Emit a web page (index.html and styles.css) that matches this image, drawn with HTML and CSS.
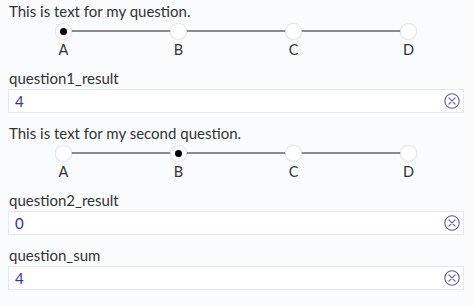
FILE: index.html
```html
<!DOCTYPE html>
<html lang="en">
<head>
  <meta charset="UTF-8">
  <title>Survey</title>
  <link rel="stylesheet" href="styles.css">
</head>
<body>
  <div class="form">
    <div class="question">
      <div class="q-text">This is text for my question.</div>
      <div class="slider">
        <div class="stops">
          <span class="knob selected"></span>
          <span class="knob"></span>
          <span class="knob"></span>
          <span class="knob"></span>
        </div>
        <div class="labels">
          <span>A</span><span>B</span><span>C</span><span>D</span>
        </div>
      </div>
    </div>
    <div class="field">
      <div class="f-label">question1_result</div>
      <div class="input">
        <span class="value">4</span>
        <svg class="clear" width="16" height="16" viewBox="0 0 16 16"><circle cx="8" cy="8" r="7.2" fill="none" stroke="#5b5ba8" stroke-width="1.1"/><path d="M4.9 4.9 L11.1 11.1 M11.1 4.9 L4.9 11.1" stroke="#5b5ba8" stroke-width="1.1" stroke-linecap="round"/></svg>
      </div>
    </div>

    <div class="question">
      <div class="q-text">This is text for my second question.</div>
      <div class="slider">
        <div class="stops">
          <span class="knob"></span>
          <span class="knob selected"></span>
          <span class="knob"></span>
          <span class="knob"></span>
        </div>
        <div class="labels">
          <span>A</span><span>B</span><span>C</span><span>D</span>
        </div>
      </div>
    </div>
    <div class="field">
      <div class="f-label">question2_result</div>
      <div class="input">
        <span class="value">0</span>
        <svg class="clear" width="16" height="16" viewBox="0 0 16 16"><circle cx="8" cy="8" r="7.2" fill="none" stroke="#5b5ba8" stroke-width="1.1"/><path d="M4.9 4.9 L11.1 11.1 M11.1 4.9 L4.9 11.1" stroke="#5b5ba8" stroke-width="1.1" stroke-linecap="round"/></svg>
      </div>
    </div>

    <div class="field">
      <div class="f-label">question_sum</div>
      <div class="input">
        <span class="value">4</span>
        <svg class="clear" width="16" height="16" viewBox="0 0 16 16"><circle cx="8" cy="8" r="7.2" fill="none" stroke="#5b5ba8" stroke-width="1.1"/><path d="M4.9 4.9 L11.1 11.1 M11.1 4.9 L4.9 11.1" stroke="#5b5ba8" stroke-width="1.1" stroke-linecap="round"/></svg>
      </div>
    </div>
  </div>
</body>
</html>
```

FILE: styles.css
```css
body {
  margin: 0;
  background-color: #fafbfd;
  color: #333;
  font-family: Lato, "Open Sans", sans-serif;
  font-size: 15px;
}
.form {
  padding: 2px 10px 0 8px;
}
.question {
  display: flex;
  flex-direction: column;
}
.q-text {
  line-height: 18px;
  padding-left: 1px;
}
.slider {
  width: 362px;
  margin: 0 auto;
}
.stops {
  position: relative;
  display: flex;
  justify-content: space-between;
  align-items: center;
  height: 22px;
}
.stops::before {
  content: "";
  position: absolute;
  left: 8px;
  right: 8px;
  top: 10px;
  height: 2px;
  background-color: #8c8c8c;
}
.knob {
  position: relative;
  width: 15px;
  height: 15px;
  border-radius: 50%;
  background-color: white;
  border: 1px solid #e3e5ea;
  box-shadow: 0 0 2px rgba(0, 0, 0, 0.08);
}
.knob.selected::after {
  content: "";
  position: absolute;
  left: 4px;
  top: 4px;
  width: 7px;
  height: 7px;
  border-radius: 50%;
  background-color: black;
}
.labels {
  display: flex;
  justify-content: space-between;
  font-size: 14.5px;
  line-height: 16px;
}
.labels span {
  width: 17px;
  text-align: center;
}
.field {
  margin-top: 11px;
  margin-bottom: 11px;
}
.f-label {
  line-height: 18px;
  padding-left: 1px;
}
.input {
  display: flex;
  justify-content: space-between;
  align-items: center;
  height: 22px;
  margin-top: 2px;
  padding: 0 3px 0 6px;
  background-color: white;
  border: 1px solid #e6e8ed;
}
.value {
  color: #35359a;
}
.clear {
  display: block;
}
```
